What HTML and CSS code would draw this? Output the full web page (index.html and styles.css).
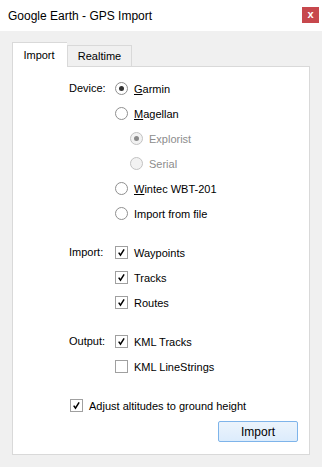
FILE: index.html
```html
<!DOCTYPE html>
<html>
<head>
<meta charset="utf-8">
<link rel="stylesheet" href="styles.css">
</head>
<body>
<div class="window">
  <div class="titlebar">
    <span class="title">Google Earth - GPS Import</span>
    <span class="close">x</span>
  </div>
  <div class="client">
    <div class="tabs">
      <div class="tab active">Import</div>
      <div class="tab">Realtime</div>
    </div>
    <div class="pane">
      <div class="group">
        <div class="label">Device:</div>
        <div class="controls">
          <div class="row"><span class="radio checked"></span><span class="text"><u>G</u>armin</span></div>
          <div class="row"><span class="radio"></span><span class="text"><u>M</u>agellan</span></div>
          <div class="row sub disabled"><span class="radio checked"></span><span class="text">Explorist</span></div>
          <div class="row sub disabled"><span class="radio"></span><span class="text">Serial</span></div>
          <div class="row"><span class="radio"></span><span class="text"><u>W</u>intec WBT-201</span></div>
          <div class="row"><span class="radio"></span><span class="text">Import from file</span></div>
        </div>
      </div>
      <div class="group">
        <div class="label">Import:</div>
        <div class="controls">
          <div class="row"><span class="check on"><svg viewBox="0 0 13 13"><path d="M3.2 6.6 L5.3 9.6 L9.6 2.8" /></svg></span><span class="text">Waypoints</span></div>
          <div class="row"><span class="check on"><svg viewBox="0 0 13 13"><path d="M3.2 6.6 L5.3 9.6 L9.6 2.8" /></svg></span><span class="text">Tracks</span></div>
          <div class="row"><span class="check on"><svg viewBox="0 0 13 13"><path d="M3.2 6.6 L5.3 9.6 L9.6 2.8" /></svg></span><span class="text">Routes</span></div>
        </div>
      </div>
      <div class="group">
        <div class="label">Output:</div>
        <div class="controls">
          <div class="row"><span class="check on"><svg viewBox="0 0 13 13"><path d="M3.2 6.6 L5.3 9.6 L9.6 2.8" /></svg></span><span class="text">KML Tracks</span></div>
          <div class="row"><span class="check"></span><span class="text">KML LineStrings</span></div>
        </div>
      </div>
      <div class="row adjust"><span class="check on"><svg viewBox="0 0 13 13"><path d="M3.2 6.6 L5.3 9.6 L9.6 2.8" /></svg></span><span class="text">Adjust altitudes to ground height</span></div>
      <div class="actions">
        <button class="button">Import</button>
      </div>
    </div>
  </div>
</div>
</body>
</html>
```

FILE: styles.css
```css
html, body {
  margin: 0;
  padding: 0;
}
body {
  width: 322px;
  height: 467px;
  background: #f0f0f0;
  font-family: "Liberation Sans", Arial, sans-serif;
  font-size: 11px;
  color: #000;
  overflow: hidden;
}
.window {
  display: flex;
  flex-direction: column;
  height: 467px;
}
.titlebar {
  height: 31px;
  background: #fff;
  display: flex;
  align-items: center;
  justify-content: space-between;
  padding-left: 8px;
  padding-right: 3px;
  box-sizing: border-box;
}
.title {
  font-size: 12px;
  color: #000;
}
.close {
  width: 17px;
  height: 16px;
  background: #c7484d;
  color: #fff;
  font-size: 11px;
  font-weight: bold;
  line-height: 14px;
  text-align: center;
  margin-top: -1px;
}
.client {
  padding: 11px 12px 0 12px;
}
.tabs {
  display: flex;
  align-items: flex-end;
  height: 24px;
  position: relative;
  z-index: 1;
}
.tab {
  height: 21px;
  line-height: 21px;
  border: 1px solid #d9d9d9;
  border-bottom: none;
  background: #f0f0f0;
  box-sizing: border-box;
  text-align: center;
}
.tab.active {
  height: 25px;
  line-height: 24px;
  background: #fff;
  margin-bottom: -1px;
  width: 55px;
  padding-right: 2px;
  border-right: none;
}
.tab:not(.active) {
  width: 65px;
}
.pane {
  background: #fff;
  border: 1px solid #d9d9d9;
  height: 389px;
  box-sizing: border-box;
  padding: 9px 0 0 56px;
}
.group {
  display: flex;
  margin-bottom: 14px;
}
.label {
  width: 46px;
  height: 25px;
  line-height: 24px;
}
.controls {
  display: flex;
  flex-direction: column;
}
.row {
  height: 25px;
  display: flex;
  align-items: center;
}
.row.sub {
  padding-left: 15px;
}
.disabled .text {
  color: #8d8d8d;
}
.text {
  margin-left: 6px;
  white-space: nowrap;
}
.radio {
  width: 13px;
  height: 13px;
  border-radius: 50%;
  border: 1px solid #8f8f8f;
  box-sizing: border-box;
  background: #fff;
  position: relative;
  flex: none;
}
.radio.checked::after {
  content: "";
  position: absolute;
  left: 3px;
  top: 3px;
  width: 5px;
  height: 5px;
  border-radius: 50%;
  background: #333;
}
.disabled .radio {
  border-color: #c2c2c2;
  background: #f2f2f2;
}
.disabled .radio.checked::after {
  background: #8a8a8a;
}
.check {
  width: 13px;
  height: 13px;
  border: 1px solid #a0a0a0;
  box-sizing: border-box;
  background: #fff;
  flex: none;
  display: flex;
}
.check svg {
  width: 11px;
  height: 11px;
}
.check path {
  fill: none;
  stroke: #000;
  stroke-width: 1.8;
}
.adjust {
  margin-left: 1px;
}
.actions {
  display: flex;
  justify-content: flex-end;
  padding-right: 11px;
  margin-top: 3px;
}
.button {
  width: 80px;
  height: 21px;
  border: 1px solid #7eb4ea;
  border-radius: 2px;
  background: linear-gradient(#ecf4fc, #dcecfc);
  font-family: "Liberation Sans", Arial, sans-serif;
  font-size: 12px;
  color: #000;
  padding: 0;
}
```
